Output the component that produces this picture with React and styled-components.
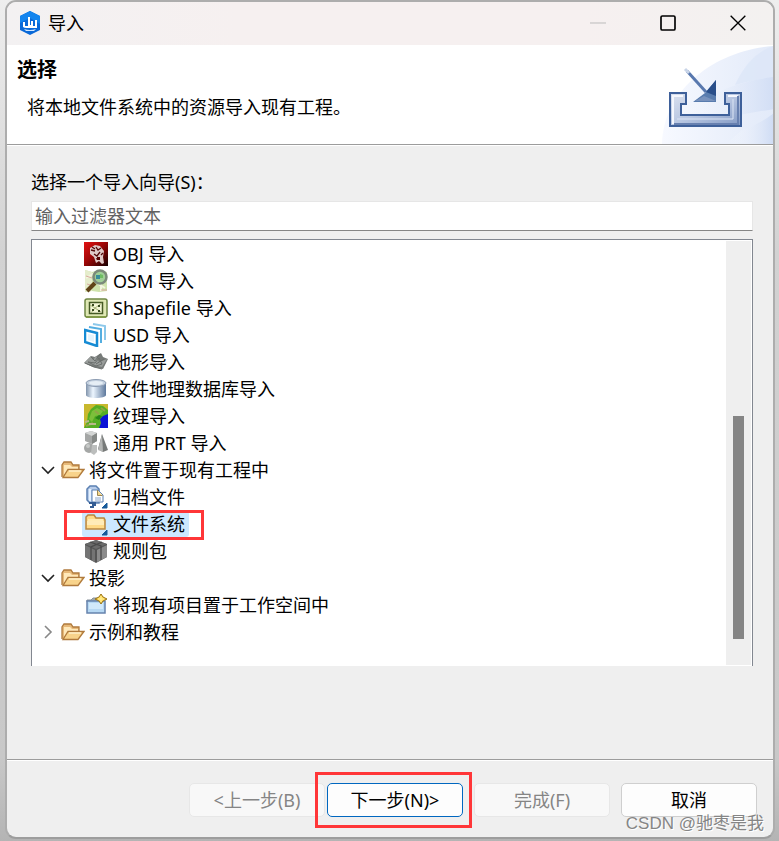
import React from "react";
import styled, { createGlobalStyle, css } from "styled-components";

const GlobalStyle = createGlobalStyle`
  *, *::before, *::after { box-sizing: border-box; }
  body {
    margin: 0;
    color: #000;
    font-family: "Noto Sans", "Noto Sans CJK SC", sans-serif;
    font-size: 18px;
    line-height: 26px;
  }
  button, input { font: inherit; }
`;

const Desktop = styled.div`
  display: flex;
  min-height: 100vh;
  padding: 0 4px 2px 5px;
  background: linear-gradient(#eeeeee, #d2d2d2 30%, #c8c8c8 90%, #b4b4b4);
`;

const Dialog = styled.main`
  flex: 1;
  display: flex;
  flex-direction: column;
  min-width: 0;
  border: 2px solid #adadad;
  border-bottom-color: #9d9d9d;
  border-radius: 11px;
  background: #efefef;
  overflow: hidden;
`;

const TitleBar = styled.header`
  display: flex;
  align-items: center;
  height: 43px;
  padding-left: 11px;
  padding-bottom: 2px;
  background: linear-gradient(90deg, #f3f1f2, #f6f0f0 30%, #f6f0f0 75%, #f3f1f0);
`;

const AppName = styled.span`
  flex: 1;
  margin-left: 6px;
`;

const WindowButton = styled.button`
  display: grid;
  place-items: center;
  width: 70px;
  height: 40px;
  padding: 0;
  border: 0;
  background: none;
`;

const Banner = styled.section`
  display: flex;
  justify-content: space-between;
  height: 100px;
  border-bottom: 1px solid #9c9c9c;
  background: #fff;
`;

const BannerText = styled.div`
  padding: 12px 10px;
`;

const Heading = styled.h1`
  margin: 0;
  font-size: 20px;
  line-height: 26px;
  font-weight: 600;
`;

const Description = styled.p`
  margin: 11px 0 0 10px;
`;

const Content = styled.section`
  flex: 1;
  display: flex;
  flex-direction: column;
  min-height: 0;
  padding: 24px 20px 93px 24px;
  border-top: 1px solid #fff;
`;

const FilterLabel = styled.label`
  line-height: 24px;
`;

const FilterInput = styled.input`
  height: 30px;
  margin-top: 7px;
  padding: 0 3px;
  border: 1px solid #e6e6e6;
  border-bottom-color: #868686;
  border-radius: 0;
  background: #fff;
  outline: 0;
  &::placeholder { color: #626262; opacity: 1; }
`;

const TreeFrame = styled.div`
  flex: 1;
  display: flex;
  justify-content: space-between;
  margin-top: 8px;
  padding: 0 1px 1px 0;
  border: 1px solid #828790;
  border-bottom: 0;
  background: #fff;
`;

const Tree = styled.ul`
  flex: 1;
  margin: 0;
  padding: 0 0 0 6px;
  list-style: none;
`;

const TreeRow = styled.li`
  position: relative;
  display: flex;
  align-items: center;
  height: 27px;
  padding-left: ${(p) => (p.$nested ? 44 : 0)}px;
`;

const RowBody = styled.span`
  display: flex;
  align-items: center;
  gap: ${(p) => (p.$nested ? 5 : 4)}px;
  height: 26px;
  padding: 0 4px 0 2px;
  border-radius: 3px;
  ${(p) => p.$selected && css`background: #cce8ff;`}
`;

const Toggle = styled.button`
  display: grid;
  place-items: center;
  width: 20px;
  height: 24px;
  margin-right: 1px;
  padding: 0;
  border: 0;
  background: none;
`;

const Highlight = styled.span`
  position: absolute;
  border: 3px solid #ff3638;
  pointer-events: none;
`;

const RowHighlight = styled(Highlight)`
  inset: 0 auto -3px 26px;
  width: 140px;
`;

const ButtonHighlight = styled(Highlight)`
  inset: -11px -9px -11px -12px;
`;

const ScrollTrack = styled.div`
  display: flex;
  flex-direction: column;
  align-items: center;
  width: 25px;
  margin-top: 1px;
  background: #efefef;
`;

const ScrollSpace = styled.div`
  flex: ${(p) => p.$share};
`;

const ScrollThumb = styled.div`
  flex: 223;
  width: 11px;
  background: #858585;
`;

const Footer = styled.footer`
  position: relative;
  display: flex;
  justify-content: flex-end;
  height: 78px;
  padding: 23px 16px 0;
  border-top: 1px solid #9c9c9c;
  box-shadow: inset 0 1px #fff;
`;

const ButtonSlot = styled.div`
  position: relative;
  flex: 0 1 136px;
  height: 34px;
  margin-left: ${(p) => p.$gap}px;
`;

const ActionButton = styled.button`
  width: 100%;
  height: 34px;
  padding: 0;
  border: 1px solid ${(p) => (p.$primary ? "#0067c0" : "#cfcfcf")};
  border-radius: 5px;
  background: #fdfdfd;
  color: #000;
  &:disabled {
    border-color: #e7e7e7;
    background: #f8f8f8;
    color: #858585;
  }
`;

const Watermark = styled.span`
  position: absolute;
  right: 9px;
  bottom: 0;
  color: #858585;
  font-family: "Liberation Sans", "Noto Sans CJK SC", sans-serif;
  font-size: 17px;
  text-shadow: 1px 1px #fff;
`;

const Svg = ({ size = 24, children, ...rest }) => (
  <svg width={size} height={size} viewBox="0 0 24 24" aria-hidden="true" {...rest}>{children}</svg>
);

const AppLogo = () => (
  <Svg>
    <path d="M12 0 22 5v14l-10 5L2 19V5z" fill="#0a69d8" />
    <path d="m12 0 10 5v8L12 7 2 12V5z" fill="#1284ee" />
    <path d="M5 16v-5h2v4h3V6h2v8h1v-4h2v5h2V9h2v8H9q-3 0-4-1z" fill="#fff" />
    <path d="M6 18q6 2 12 0l-2 2H8z" fill="#d5e9ff" />
  </Svg>
);

const ObjIcon = () => (
  <Svg>
    <defs>
      <linearGradient id="obj" x1="0" y1="0" x2="1" y2="1">
        <stop stopColor="#e21212" /><stop offset=".45" stopColor="#a00808" /><stop offset="1" stopColor="#150000" />
      </linearGradient>
    </defs>
    <path d="M0 0h24v24H0z" fill="url(#obj)" />
    <path d="m6 6 5-3 5 1 4 5-1 6 1 6-2 1-3-3-3 2-2-6-4-3z" fill="#dfc9c7" />
    <path d="m7 8 4 1M12 5l2 3 3-2M10 12l3 2 3-4M12 17l3-1M17 13l2-2M8 5l3 2" stroke="#500808" strokeWidth="1.3" fill="none" />
    <path d="M13 15h3v3h-3z" fill="#500" />
  </Svg>
);

const OsmIcon = () => (
  <Svg>
    <path d="m1 1 7 2 7-2 8 2v19l-8 1-7-1-7 1z" fill="#cfe3ad" />
    <path d="m1 1 7 2v19l-7 1z" fill="#e5edcc" />
    <path d="m2 9 7-4 4 9 8 5M17 2v20" stroke="#f3f6df" strokeWidth="2" fill="none" />
    <path d="m2 7 6 2M3 15l7 2M17 21h6" stroke="#d9aaa0" />
    <path d="m3 22 8-8" stroke="#604418" strokeWidth="4" />
    <circle cx="16" cy="8" r="6.5" fill="#9fcf96" stroke="#7b8a7a" strokeWidth="2.5" />
    <path d="M12 6h4v4h-4z" fill="#388e9a" />
    <path d="m16 5 3 1v3h-3z" fill="#6dbd62" />
  </Svg>
);

const ShapefileIcon = () => (
  <Svg>
    <rect x="1" y="3" width="22" height="18" rx="2" fill="#dfe8b4" stroke="#6f8644" strokeWidth="1.5" />
    <path d="M5.5 6.5h13v11h-13z" fill="#f3f6d4" stroke="#455a24" strokeWidth="1.5" />
    <path d="m6 9 5 3 7-5M11 12l-4 5M11 12l6 4" fill="none" stroke="#a4b276" />
    <path d="M8 8h2v2H8zm6 1h2v2h-2zm0 5h2v2h-2zM8 13h2v2H8z" fill="#38491e" />
    <path d="M2 21h20" stroke="#829a49" strokeWidth="2" />
  </Svg>
);

const UsdIcon = () => (
  <Svg>
    <g fill="none" strokeWidth="2">
      <path d="m9 1 12 2v14" stroke="#8cc8ea" /><path d="m5 4 12 2v14" stroke="#54aee0" />
      <path d="m1 7 12 3v13L1 19z" stroke="#168bd4" strokeWidth="2.5" />
      <path d="M4 11v6l6 2v-7z" fill="#e4f4fd" stroke="none" />
    </g>
  </Svg>
);

const TerrainIcon = () => (
  <Svg>
    <path d="m0 13 7-7 4 1 6-4 2 4 5 2-5 10-10-2z" fill="#777b79" />
    <path d="m0 13 7-7 2 4 3-4 3 6 8-3-5 8-9-2z" fill="#999d9b" />
    <path d="m4 12 7 1 4-5 3 6-6 2zM7 7l4 4 5-7M12 14l8-5" stroke="#6b6f6d" fill="none" />
    <path d="m1 13 9 4 8 2" stroke="#6b6f6d" fill="none" />
  </Svg>
);

const DatabaseIcon = () => (
  <Svg>
    <defs><linearGradient id="db"><stop stopColor="#8093ab" /><stop offset=".35" stopColor="#edf6ff" /><stop offset="1" stopColor="#5d789c" /></linearGradient></defs>
    <path d="M2 6v12c0 4 20 4 20 0V6z" fill="url(#db)" />
    <ellipse cx="12" cy="6" rx="10" ry="3.5" fill="#c4d1e0" stroke="#8c9cb2" />
    <ellipse cx="12" cy="6" rx="7" ry="2" fill="#e6eef5" />
  </Svg>
);

const TextureIcon = () => (
  <Svg>
    <path d="M0 0h24v24H0z" fill="#c8b82e" />
    <path d="m0 24 3-6 1-8 3-5 5-4 7 1 5 4v18z" fill="#55ad24" />
    <path d="m8 7 5-3 6 3-3 4-5 1-3 6-3-3z" fill="#7cbf3a" />
    <path d="m2 22 7-3M11 7l4 3M17 4l4 3" stroke="#91a447" strokeWidth="2" />
    <path d="m24 10-5 2-3 3 1 4-2 5h9z" fill="#0b13d6" />
    <path d="m11 14 4-3 3 1-3 4z" fill="#278517" />
    <path d="m1 18 4-1M5 20h7" stroke="#b9b88a" strokeWidth="2" />
  </Svg>
);

const PrtIcon = () => (
  <Svg>
    <path d="m1 2 6-2 6 2v8l-5 3-7-3z" fill="#a5a7a6" /><path d="m1 2 6-2 6 2-5 3z" fill="#d4d6d5" />
    <path d="M8 5v8l5-3V2z" fill="#868987" />
    <circle cx="5" cy="17" r="5" fill="#a5a7a6" /><circle cx="4" cy="15" r="2" fill="#c6c8c7" />
    <path d="m18 3 6 16-5 2-5-3z" fill="#777a79" /><path d="m18 3-4 16 5 2z" fill="#b4b6b5" />
    <path d="M8 14h5v7l-3 3-3-2z" fill="#bcbebd" />
  </Svg>
);

const OpenFolderIcon = () => (
  <Svg>
    <path d="M1 19V7l2-3h7l2 3h6v4" fill="#e7b979" stroke="#b07a3c" strokeWidth="1.3" />
    <path d="M3 7h6l2 2h6v3H7l-4 5z" fill="#ffe9ba" />
    <path d="m2 19.5 5-8h16l-6 8z" fill="#f8d38b" stroke="#b07a3c" strokeWidth="1.3" />
    <path d="M8 13h12" stroke="#fff1ca" strokeWidth="1.5" />
  </Svg>
);

const Corner = () => <path d="M23 18v5h-5z" fill="#165a9a" stroke="#165a9a" />;

const ArchiveIcon = () => (
  <Svg>
    <path d="M6 1h6l3 3v14H6l-3-3V4z" fill="#b8cce9" stroke="#5b80b2" strokeWidth="1.5" />
    <path d="M8 5h6l5 5v7H8z" fill="#fff" stroke="#5b80b2" />
    <path d="M13.500 5v5.500h5" fill="#f5d68a" stroke="#9a8652" />
    <path d="M11 13h6M11 15h6" stroke="#8aa6cb" /><path d="M6 4v12" stroke="#e5f2ff" strokeWidth="2" />
    <path d="M5 18h6v2H9v2H6" stroke="#345d94" strokeWidth="2" fill="none" />
    <Corner />
  </Svg>
);

const FolderIcon = () => (
  <Svg>
    <path d="M2 17V5l2-2h6l2 3h8l1 2v9z" fill="#ffda87" stroke="#b98641" strokeWidth="1.5" />
    <path d="M4 8h15" stroke="#fff1c2" strokeWidth="1.5" />
    <path d="M3 9h17v4H3z" fill="#ffebb8" />
    <Corner />
  </Svg>
);

const CubeIcon = () => (
  <Svg>
    <path d="m1 5 11-4 11 4v13l-11 6L1 18z" fill="#555" />
    <path d="m1 5 11-4 11 4-11 5z" fill="#6a6a6a" /><path d="m1 6 10 5v12L1 18z" fill="#747474" />
    <path d="m13 11 10-5v12l-10 5z" fill="#8b8b8b" />
    <path d="m6 3 11 4v14M18 3 7 8v13" fill="none" stroke="#4a4a4a" strokeWidth="1.3" />
  </Svg>
);

const ProjectIcon = () => (
  <Svg>
    <path d="M3 7h4l2-2h5v4H3z" fill="#a1a9aa" stroke="#8b939a" />
    <path d="M3 8h18v12H3z" fill="#b6d8f3" stroke="#6683ad" strokeWidth="1.5" />
    <path d="M5 10h14v6H5z" fill="#d1e9fa" />
    <path d="m17 1 2 3 4 2-4 2-2 3-2-3-4-2 4-2z" fill="#ffd54f" stroke="#977318" />
    <path d="M17 3v6M14 6h6" stroke="#fff4a2" />
  </Svg>
);

const Chevron = ({ open }) => (
  <svg width="16" height="16" viewBox="0 0 16 16" aria-hidden="true">
    <path d={open ? "m2 5 6 6 6-6" : "m5 2 6 6-6 6"} fill="none" stroke={open ? "#222" : "#888"} strokeWidth="1.6" />
  </svg>
);

const ImportArtwork = () => (
  <svg width="112" height="99" viewBox="1 0 112 99" aria-hidden="true">
    <defs>
      <linearGradient id="wash" x1="0" y1="0" x2="1" y2="0"><stop stopColor="#f7f9ff" /><stop offset="1" stopColor="#e2eaf9" /></linearGradient>
      <linearGradient id="wash2" x1="0" y1="0" x2="1" y2="0"><stop stopColor="#fff" stopOpacity="0" /><stop offset="1" stopColor="#cedbf4" /></linearGradient>
      <linearGradient id="tray" x1="0" y1="0" x2="1" y2="1"><stop stopColor="#dce2ef" /><stop offset=".5" stopColor="#b9c7e2" /><stop offset="1" stopColor="#8198c3" /></linearGradient>
    </defs>
    <path d="M2 99C3 45 55 5 114 1v98z" fill="url(#wash)" />
    <path d="M114 1c-14 4-28 15-39 39C86 37 99 34 114 32z" fill="#dce6f8" opacity=".8" />
    <path d="M114 32C70 37 29 56 8 86q55-14 106-22z" fill="url(#wash2)" opacity=".8" />
    <path d="M82 85q18-6 32-17v31H66z" fill="url(#wash2)" />
    <path d="M10 48h16v11h-5v11h48V59h-4V48h16v33H10z" fill="url(#tray)" stroke="#3e609a" strokeWidth="2" />
    <path d="M13 79V51h10M68 51h10" fill="none" stroke="#f5f7fd" strokeWidth="2" />
    <path d="M78 51v28H14" fill="none" stroke="#6780b0" strokeWidth="2" />
    <path d="M17 74h56V54" fill="none" stroke="#dce5f5" />
    <path d="m27 26 19 21" stroke="#5878ae" strokeWidth="3" />
    <path d="m25 24 4 4" stroke="#c9d5e8" strokeWidth="3" />
    <path d="M56 35v22H33l12-9z" fill="#597cae" />
    <path d="M56 35v16l-10-4z" fill="#294e8a" />
    <path d="m35 56 9-5 12 5z" fill="#7892bd" />
  </svg>
);

const items = [
  { label: "OBJ 导入", icon: ObjIcon, nested: true },
  { label: "OSM 导入", icon: OsmIcon, nested: true },
  { label: "Shapefile 导入", icon: ShapefileIcon, nested: true },
  { label: "USD 导入", icon: UsdIcon, nested: true },
  { label: "地形导入", icon: TerrainIcon, nested: true },
  { label: "文件地理数据库导入", icon: DatabaseIcon, nested: true },
  { label: "纹理导入", icon: TextureIcon, nested: true },
  { label: "通用 PRT 导入", icon: PrtIcon, nested: true },
  { label: "将文件置于现有工程中", icon: OpenFolderIcon, open: true },
  { label: "归档文件", icon: ArchiveIcon, nested: true },
  { label: "文件系统", icon: FolderIcon, nested: true, selected: true },
  { label: "规则包", icon: CubeIcon, nested: true },
  { label: "投影", icon: OpenFolderIcon, open: true },
  { label: "将现有项目置于工作空间中", icon: ProjectIcon, nested: true },
  { label: "示例和教程", icon: OpenFolderIcon, open: false },
];

const Item = ({ label, icon: Icon, nested, open, selected }) => (
  <TreeRow $nested={nested} role="treeitem" aria-level={nested ? 2 : 1} aria-expanded={open} aria-selected={!!selected}>
    {!nested && <Toggle aria-label={label}><Chevron open={open} /></Toggle>}
    <RowBody $nested={nested} $selected={selected}><Icon />{label}</RowBody>
    {selected && <RowHighlight />}
  </TreeRow>
);

export default function App() {
  return (
    <>
      <GlobalStyle />
      <Desktop>
        <Dialog>
          <TitleBar>
            <AppLogo />
            <AppName>导入</AppName>
            <WindowButton aria-label="最小化" disabled>
              <Svg size={16}><path d="M0 12h24" stroke="#bbb" strokeWidth="1.5" /></Svg>
            </WindowButton>
            <WindowButton aria-label="最大化">
              <Svg size={16}><rect x="1.5" y="1.5" width="21" height="21" rx="2" fill="none" stroke="#000" strokeWidth="2.5" /></Svg>
            </WindowButton>
            <WindowButton aria-label="关闭">
              <Svg size={16}><path d="m1 1 22 22M23 1 1 23" stroke="#000" strokeWidth="2" /></Svg>
            </WindowButton>
          </TitleBar>
          <Banner>
            <BannerText>
              <Heading>选择</Heading>
              <Description>将本地文件系统中的资源导入现有工程。</Description>
            </BannerText>
            <ImportArtwork />
          </Banner>
          <Content>
            <FilterLabel htmlFor="filter">选择一个导入向导(S)：</FilterLabel>
            <FilterInput id="filter" placeholder="输入过滤器文本" />
            <TreeFrame>
              <Tree role="tree">{items.map((item) => <Item key={item.label} {...item} />)}</Tree>
              <ScrollTrack>
                <ScrollSpace $share={175} />
                <ScrollThumb />
                <ScrollSpace $share={26} />
              </ScrollTrack>
            </TreeFrame>
          </Content>
          <Footer>
            <ButtonSlot $gap={0}><ActionButton disabled>&lt;上一步(B)</ActionButton></ButtonSlot>
            <ButtonSlot $gap={2}><ActionButton $primary>下一步(N)&gt;</ActionButton><ButtonHighlight /></ButtonSlot>
            <ButtonSlot $gap={11}><ActionButton disabled>完成(F)</ActionButton></ButtonSlot>
            <ButtonSlot $gap={11}><ActionButton>取消</ActionButton></ButtonSlot>
            <Watermark>CSDN @驰枣是我</Watermark>
          </Footer>
        </Dialog>
      </Desktop>
    </>
  );
}
